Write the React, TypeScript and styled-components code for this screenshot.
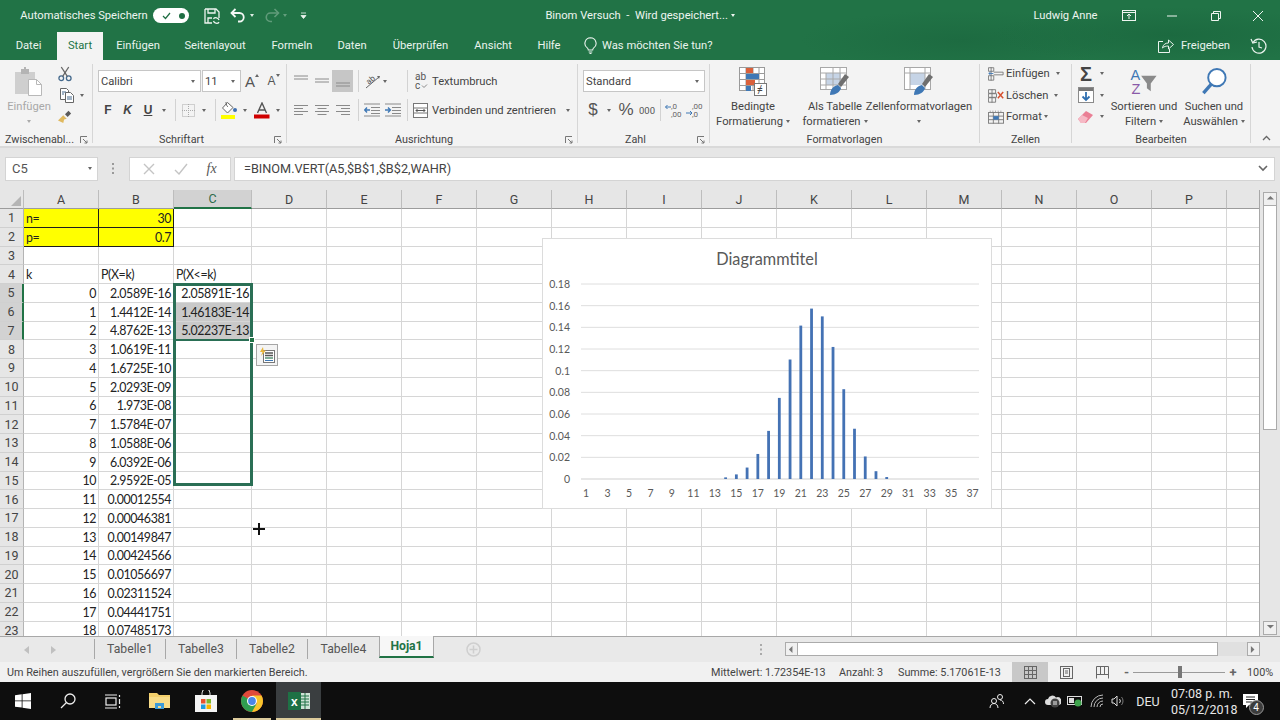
import React from "react";
import styled, { createGlobalStyle } from "styled-components";

const GlobalStyle = createGlobalStyle`
  html, body { margin: 0; padding: 0; background: #e6e6e6; }
  * { box-sizing: border-box; }
`;

const UI = `Roboto, "Noto Sans", sans-serif`;
const CELL = `Lato, "Liberation Sans", sans-serif`;

const Page = styled.div`
  width: 1280px;
  height: 720px;
  overflow: hidden;
  display: flex;
  flex-direction: column;
  font-family: ${UI};
  font-size: 11.2px;
  color: #444;
`;

/* ---------- title + tabs ---------- */
const Chrome = styled.div`
  background:
    radial-gradient(ellipse 180px 28px at 1170px 35px, #1c6a40 0%, rgba(28, 106, 64, 0) 100%),
    radial-gradient(ellipse 160px 30px at 960px 40px, #1d6b41 0%, rgba(29, 107, 65, 0) 100%),
    #217346;
  color: #fff;
`;

const TitleRow = styled.div`
  height: 31px;
  display: flex;
  align-items: center;
  padding-left: 21px;
  color: #eef5f0;
`;

const TitleBit = styled.div<{ $w?: number; $ml?: number; $dim?: boolean }>`
  display: flex;
  align-items: center;
  justify-content: ${(p) => (p.$w ? "center" : "flex-start")};
  white-space: nowrap;
  flex: none;
  width: ${(p) => (p.$w ? `${p.$w}px` : "auto")};
  margin-left: ${(p) => p.$ml ?? 0}px;
  opacity: ${(p) => (p.$dim ? 0.35 : 1)};
`;

const AutoSave = styled.div`
  width: 36px;
  height: 15px;
  margin-left: 6px;
  flex: none;
  border-radius: 8px;
  background: #fff;
  display: flex;
  align-items: center;
  justify-content: space-between;
  padding: 0 4px 0 9px;
`;

const AutoSaveDot = styled.span`
  width: 6px;
  height: 6px;
  border-radius: 50%;
  background: #1f6e43;
`;

const TabRow = styled.div`
  height: 29px;
  display: flex;
  align-items: flex-end;
`;

const Tab = styled.div<{ $w: number; $on?: boolean }>`
  width: ${(p) => p.$w}px;
  height: 28px;
  display: flex;
  align-items: center;
  justify-content: center;
  white-space: nowrap;
  padding-bottom: 1px;
  background: ${(p) => (p.$on ? "#f3f3f3" : "transparent")};
  color: ${(p) => (p.$on ? "#217346" : "#eaf3ed")};
`;

const TellMe = styled.div`
  display: flex;
  align-items: center;
  gap: 5px;
  margin-left: 8px;
  height: 28px;
  padding-bottom: 1px;
  color: #eaf3ed;
`;

const ShareBox = styled.div`
  margin-left: auto;
  display: flex;
  align-items: center;
  height: 28px;
  padding: 0 13px 1px 0;
  color: #eaf3ed;
  gap: 7px;
`;

/* ---------- ribbon ---------- */
const Ribbon = styled.div`
  height: 88px;
  background: #f3f3f3;
  border-bottom: 2px solid #d9d9d9;
  display: flex;
  padding-top: 4px;
  position: relative;
`;

const Group = styled.div<{ $w: number }>`
  width: ${(p) => p.$w}px;
  height: 79px;
  flex: none;
  border-right: 1px solid #d6d6d6;
  display: flex;
  flex-direction: column;
`;

const Body = styled.div<{ $pt?: number; $pl?: number }>`
  height: 65px;
  flex: none;
  padding-top: ${(p) => p.$pt ?? 6}px;
  padding-left: ${(p) => p.$pl ?? 0}px;
  display: flex;
`;

const Stack = styled.div<{ $gap?: number; $mt?: number }>`
  display: flex;
  flex-direction: column;
  margin-top: ${(p) => p.$mt ?? 0}px;
  gap: ${(p) => p.$gap ?? 7}px;
`;

const Row = styled.div`
  display: flex;
  align-items: center;
  height: 22px;
  white-space: nowrap;
`;

const GroupLabel = styled.div<{ $shift?: number }>`
  height: 14px;
  flex: none;
  line-height: 14px;
  margin-top: 4px;
  display: grid;
  grid-template-columns: 1fr auto 1fr;
  font-size: 10.8px;
  color: #444;
  white-space: nowrap;
  & > span {
    grid-column: 2;
    transform: translateX(${(p) => p.$shift ?? 0}px);
  }
`;

const LauncherBox = styled.div`
  grid-column: 3;
  justify-self: end;
  padding-right: 4px;
  display: flex;
  align-items: center;
`;

const Cell = styled.div<{ $w: number; $on?: boolean }>`
  width: ${(p) => p.$w}px;
  height: 22px;
  flex: none;
  display: flex;
  align-items: center;
  justify-content: center;
  background: ${(p) => (p.$on ? "#c6c6c6" : "transparent")};
`;

const VSep = styled.div<{ $w: number }>`
  width: ${(p) => p.$w}px;
  height: 22px;
  flex: none;
  display: flex;
  justify-content: center;
  &::before {
    content: "";
    width: 1px;
    background: #d2d2d2;
  }
`;

const Caret = styled.span<{ $c?: string }>`
  display: inline-block;
  flex: none;
  width: 0;
  height: 0;
  border-left: 2.5px solid transparent;
  border-right: 2.5px solid transparent;
  border-top: 3px solid ${(p) => p.$c ?? "#666"};
`;

const SizeCaret = styled(Caret)<{ $up?: boolean }>`
  align-self: flex-start;
  margin-top: 4px;
  transform: ${(p) => (p.$up ? "rotate(180deg)" : "none")};
`;

const Combo = styled.div<{ $w: number; $ml?: number }>`
  width: ${(p) => p.$w}px;
  height: 22px;
  margin-left: ${(p) => p.$ml ?? 0}px;
  flex: none;
  background: #fff;
  border: 1px solid #c6c6c6;
  display: flex;
  align-items: center;
  justify-content: space-between;
  padding: 0 5px 0 2px;
  color: #444;
`;

const BigButton = styled.div<{ $w: number; $muted?: boolean; $mt?: number }>`
  width: ${(p) => p.$w}px;
  flex: none;
  margin-top: ${(p) => p.$mt ?? -3}px;
  display: flex;
  flex-direction: column;
  align-items: center;
  color: ${(p) => (p.$muted ? "#a8a8a8" : "#444")};
  line-height: 15px;
  white-space: nowrap;
  & > svg {
    height: 29px;
    margin-bottom: 3px;
    flex: none;
  }
`;

const BigLine = styled.div`
  height: 15px;
  display: flex;
  align-items: center;
  gap: 3px;
`;

const SmallRow = styled.div`
  height: 21.5px;
  display: flex;
  align-items: center;
  white-space: nowrap;
`;

const FontLetter = styled.span<{ $i?: boolean; $u?: boolean }>`
  font-family: "Liberation Sans", sans-serif;
  font-weight: 700;
  font-size: 12px;
  font-style: ${(p) => (p.$i ? "italic" : "normal")};
  text-decoration: ${(p) => (p.$u ? "underline" : "none")};
  color: #444;
`;

const GrowA = styled.span<{ $small?: boolean }>`
  font-family: "Liberation Sans", sans-serif;
  font-size: ${(p) => (p.$small ? 12 : 15)}px;
  color: #555;
`;

const BigSign = styled.span`
  font-family: "Liberation Sans", sans-serif;
  font-size: 17px;
  color: #555;
`;

const ThousandMark = styled.span`
  font-size: 9.5px;
  color: #555;
`;

const Sigma = styled.span`
  font-family: "Liberation Sans", sans-serif;
  font-weight: 700;
  font-size: 20px;
  line-height: 20px;
  color: #444;
`;

const Collapse = styled.div`
  position: absolute;
  right: 9px;
  bottom: 2px;
`;

/* ---------- formula bar ---------- */
const FormulaBar = styled.div`
  height: 42px;
  background: #e6e6e6;
  display: flex;
  align-items: center;
  padding: 0 5px 1px;
`;

const NameBox = styled.div`
  width: 93px;
  height: 24px;
  background: #fff;
  border: 1px solid #d4d4d4;
  display: flex;
  align-items: center;
  justify-content: space-between;
  padding: 0 5px 0 6px;
  font-size: 13px;
  color: #555;
`;

const GripDots = styled.div`
  width: 31px;
  display: flex;
  justify-content: center;
`;

const FnBox = styled.div`
  width: 102px;
  height: 24px;
  background: #fff;
  border: 1px solid #d4d4d4;
  display: flex;
  align-items: center;
  justify-content: space-around;
  padding: 0 4px;
`;

const FxText = styled.span`
  font-family: "Liberation Serif", serif;
  font-style: italic;
  font-size: 14px;
  color: #555;
`;

const FormulaInput = styled.div`
  flex: 1;
  height: 24px;
  margin-left: 3px;
  background: #fff;
  border: 1px solid #d4d4d4;
  display: flex;
  align-items: center;
  justify-content: space-between;
  padding: 0 6px 0 9px;
  font-size: 12.7px;
  color: #444;
`;

/* ---------- sheet ---------- */
const SheetRow = styled.div`
  height: 446px;
  display: flex;
  background: #e6e6e6;
`;

const Sheet = styled.div`
  width: 1260px;
  position: relative;
  overflow: hidden;
  border-right: 1px solid #a8a8a8;
`;

const SheetGrid = styled.div`
  display: grid;
  grid-template-columns: 24px 75px 75px 78px repeat(13, 75px) 33px;
  grid-template-rows: 19px;
  grid-auto-rows: 18.75px;
  background: #fff;
`;

const ColHead = styled.div<{ $on?: boolean }>`
  background: ${(p) => (p.$on ? "#d2d2d2" : "#e6e6e6")};
  border-right: 1px solid #bdbdbd;
  border-bottom: ${(p) => (p.$on ? "2px solid #217346" : "1px solid #9c9c9c")};
  display: flex;
  align-items: center;
  justify-content: center;
  font-size: 12.5px;
  color: ${(p) => (p.$on ? "#2b6a4a" : "#444")};
`;

const Corner = styled(ColHead)`
  align-items: flex-end;
  justify-content: flex-end;
  padding: 0 2px 2px 0;
`;

const RowHead = styled.div<{ $on?: boolean }>`
  background: ${(p) => (p.$on ? "#d2d2d2" : "#e6e6e6")};
  border-right: ${(p) => (p.$on ? "2px solid #217346" : "1px solid #b4b4b4")};
  border-bottom: 1px solid #d0d0d0;
  display: flex;
  align-items: center;
  justify-content: center;
  font-size: 12.5px;
  color: #444;
`;

const GridCell = styled.div<{ $right?: boolean; $fill?: string; $dark?: boolean }>`
  background: ${(p) => p.$fill ?? "#fff"};
  border-right: 1px solid ${(p) => (p.$dark ? "#1e1e1e" : "#d6d6d6")};
  border-bottom: 1px solid ${(p) => (p.$dark ? "#1e1e1e" : "#d6d6d6")};
  display: flex;
  align-items: center;
  justify-content: ${(p) => (p.$right ? "flex-end" : "flex-start")};
  padding: 1px 2px 0;
  font-family: ${CELL};
  font-size: 12.4px;
  letter-spacing: -0.4px;
  color: #222;
  white-space: nowrap;
  overflow: hidden;
`;

const Selection = styled.div`
  position: absolute;
  left: 173px;
  top: 93px;
  width: 80px;
  height: 203px;
  border: 3px solid #2a6f55;
  pointer-events: none;
`;

const SourceEdge = styled.div`
  position: absolute;
  left: 174px;
  top: 149px;
  width: 78px;
  height: 2px;
  background: #2a6f55;
`;

const FillHandle = styled.div`
  position: absolute;
  left: 249px;
  top: 147px;
  width: 6px;
  height: 6px;
  background: #217346;
  border: 1px solid #fff;
`;

const FlashTag = styled.div`
  position: absolute;
  left: 256px;
  top: 154px;
  width: 22px;
  height: 22px;
  background: #f4f4f4;
  border: 1px solid #a6a6a6;
  display: flex;
  align-items: center;
  justify-content: center;
`;

const CrossCursor = styled.svg`
  position: absolute;
  left: 253px;
  top: 333px;
`;

const ChartBox = styled.div`
  position: absolute;
  left: 542px;
  top: 48px;
  width: 450px;
  height: 271px;
  background: #fff;
  border: 1px solid #dcdcdc;
`;

const VScroll = styled.div`
  width: 20px;
  padding: 2px 3px 1px;
  display: flex;
  flex-direction: column;
`;

const ScrollBtn = styled.div<{ $w?: number }>`
  width: ${(p) => p.$w ?? 14}px;
  height: 14px;
  flex: none;
  background: #f0f0f0;
  border: 1px solid #ababab;
  display: flex;
  align-items: center;
  justify-content: center;
`;

const VThumb = styled.div`
  height: 224px;
  background: #fff;
  border: 1px solid #ababab;
  border-top: none;
`;

const VTrack = styled.div`
  flex: 1;
`;

/* ---------- sheet tabs ---------- */
const TabsBar = styled.div`
  height: 26px;
  background: #e9e9e9;
  display: flex;
  align-items: flex-start;
  border-top: 1px solid #a8a8a8;
`;

const NavArrows = styled.div`
  width: 94px;
  height: 25px;
  display: flex;
  align-items: center;
  padding-left: 24px;
  gap: 22px;
`;

const SheetTab = styled.div<{ $on?: boolean; $w: number }>`
  width: ${(p) => p.$w}px;
  height: ${(p) => (p.$on ? 22 : 20)}px;
  margin-top: ${(p) => (p.$on ? -1 : 2)}px;
  display: flex;
  align-items: center;
  justify-content: center;
  font-size: 12.2px;
  border-left: 1px solid #a8a8a8;
  border-right: ${(p) => (p.$on ? "1px solid #a8a8a8" : "none")};
  background: ${(p) => (p.$on ? "#f7f7f7" : "transparent")};
  border-bottom: ${(p) => (p.$on ? "2px solid #217346" : "none")};
  color: ${(p) => (p.$on ? "#217346" : "#555")};
  font-weight: ${(p) => (p.$on ? 700 : 400)};
`;

const AddSheet = styled.div`
  margin-left: 32px;
  height: 25px;
  display: flex;
  align-items: center;
`;

const TabGrip = styled.div`
  margin-left: 269px;
  width: 23px;
  height: 25px;
  display: flex;
  align-items: center;
  justify-content: center;
`;

const HScroll = styled.div`
  margin: 5px 0 0 12px;
  width: 475px;
  height: 14px;
  display: flex;
`;

const HThumb = styled.div`
  width: 420px;
  background: #fff;
  border: 1px solid #ababab;
  border-left: none;
`;

const HTrack = styled.div`
  flex: 1;
  background: #e0e0e0;
`;

/* ---------- status ---------- */
const StatusBar = styled.div`
  height: 20px;
  background: #f1f1f1;
  display: flex;
  align-items: center;
  padding-left: 7px;
  font-size: 10.8px;
  color: #444;
`;

const StatusStat = styled.span<{ $w: number }>`
  width: ${(p) => p.$w}px;
  flex: none;
  white-space: nowrap;
`;

const ViewBtn = styled.div<{ $on?: boolean }>`
  width: 36px;
  height: 20px;
  flex: none;
  display: flex;
  align-items: center;
  justify-content: center;
  background: ${(p) => (p.$on ? "#c8c8c8" : "transparent")};
`;

const ZoomTrack = styled.div`
  width: 92px;
  height: 1px;
  background: #9a9a9a;
  display: flex;
  align-items: center;
  padding-left: 45px;
`;

const ZoomThumb = styled.span`
  width: 4px;
  height: 12px;
  background: #777;
`;

const ZoomSign = styled.span<{ $w: number }>`
  font-weight: 700;
  font-size: 13px;
  color: #666;
  width: ${(p) => p.$w}px;
  text-align: center;
`;

const ZoomValue = styled.span`
  margin-left: 6px;
  white-space: nowrap;
`;

/* ---------- taskbar ---------- */
const Taskbar = styled.div`
  height: 38px;
  background: #0e0e0e;
  display: flex;
  align-items: center;
  color: #e8e8e8;
`;

const TaskItem = styled.div<{ $w: number; $on?: boolean; $mark?: boolean; $ml?: number }>`
  width: ${(p) => p.$w}px;
  height: 38px;
  flex: none;
  position: relative;
  margin-left: ${(p) => p.$ml ?? 0}px;
  display: flex;
  align-items: center;
  justify-content: center;
  background: ${(p) => (p.$on ? "#3a3e40" : "transparent")};
  &::after {
    content: "";
    display: ${(p) => (p.$mark ? "block" : "none")};
    position: absolute;
    left: ${(p) => (p.$on ? 0 : 5)}px;
    right: ${(p) => (p.$on ? 0 : 5)}px;
    bottom: 0;
    height: 2px;
    background: #dccb9c;
  }
`;

const TrayGroup = styled.div`
  margin-left: auto;
  display: flex;
  align-items: center;
  height: 38px;
  font-size: 12.5px;
`;

const Clock = styled.div`
  width: 60px;
  flex: none;
  font-size: 12.5px;
  line-height: 16px;
  padding-top: 2px;
  white-space: nowrap;
`;

const NoticeBadge = styled.span`
  position: absolute;
  right: -6px;
  bottom: -6px;
  width: 15px;
  height: 15px;
  border-radius: 50%;
  background: #3c3c3c;
  border: 1px solid #999;
  font-size: 10px;
  line-height: 13px;
  text-align: center;
  color: #fff;
`;

const NoticeWrap = styled.div`
  position: relative;
  display: flex;
`;

/* ---------- icons ---------- */
const SaveIcon = () => (
  <svg width="18" height="18" viewBox="0 0 18 18" fill="none" stroke="#eef5f0" strokeWidth="1.3">
    <path d="M2 2h11l3 3v6M2 2v14h7" />
    <path d="M5 2v4h7V2M5 16v-5h4" />
    <path d="M16 13a3.3 3.3 0 0 0-5.6-1.2M10.5 14a3.3 3.3 0 0 0 5.6 1.2" />
  </svg>
);
const UndoIcon = () => (
  <svg width="16" height="15" viewBox="0 0 16 15" fill="none" stroke="#f4f8f5" strokeWidth="1.8">
    <path d="M5.5 1 1.5 5l4 4" />
    <path d="M2 5h7.5a4 4 0 0 1 0 8.5H8" />
  </svg>
);
const RedoIcon = () => (
  <svg width="16" height="15" viewBox="0 0 16 15" fill="none" stroke="#d7e7dc" strokeWidth="1.6">
    <path d="M10.5 1l4 4-4 4" />
    <path d="M14 5H6.5a4 4 0 0 0 0 8.5H8" />
  </svg>
);
const Launcher = () => (
  <svg width="8" height="8" viewBox="0 0 8 8" fill="none" stroke="#777">
    <path d="M.5 7V.5H7M3 3l4 4M7 4.5V7H4.5" />
  </svg>
);
const PasteIcon = () => (
  <svg width="28" height="29" viewBox="0 0 28 29">
    <rect x="0" y="5" width="20" height="22" fill="#cfcfcf" />
    <rect x="6" y="2" width="8" height="5" fill="#b4b4b4" />
    <rect x="9" y="0" width="2" height="3" fill="#b4b4b4" />
    <path d="M13.5 12.5h8l5 5v11h-13z" fill="#fff" stroke="#b8b8b8" />
    <path d="M21.5 12.5v5h5" fill="none" stroke="#b8b8b8" />
  </svg>
);
const ScissorsIcon = () => (
  <svg width="15" height="16" viewBox="0 0 15 16" fill="none" stroke="#44698c" strokeWidth="1.4">
    <circle cx="3.5" cy="12.5" r="2.5" />
    <circle cx="11.5" cy="12.5" r="2.5" />
    <path d="M5 10.5 11.5.5" stroke="#666" />
    <path d="M10 10.5 3.5.5" stroke="#666" />
  </svg>
);
const CopyIcon = () => (
  <svg width="14" height="15" viewBox="0 0 14 15" fill="#fff" stroke="#666">
    <path d="M.5.5h6l2 2v9h-8z" />
    <path d="M5.5 4.5h5l3 3v7h-8z" />
    <path d="M2 4h4M2 6h2M7 9h5M7 11h5" stroke="#44698c" />
  </svg>
);
const BrushIcon = () => (
  <svg width="16" height="15" viewBox="0 0 16 15">
    <path d="M0 12l6-6 4 4-3 1-1 4z" fill="#e0b95f" />
    <path d="M8 5l4-4 3 3-4 4z" fill="#5a5a5a" />
  </svg>
);
const BordersIcon = () => (
  <svg width="13" height="13" viewBox="0 0 13 13" fill="none" stroke="#aaa" strokeDasharray="1 1">
    <rect x=".5" y=".5" width="12" height="12" />
    <path d="M6.5 0v13M0 6.5h13" />
  </svg>
);
const BucketIcon = () => (
  <svg width="17" height="18" viewBox="0 0 17 18">
    <path d="M6.5 1.5 1.5 7l5 5 5.5-5.5z" fill="#fff" stroke="#666" />
    <path d="M5 1c0 3 1 4 2 5" stroke="#666" fill="none" />
    <circle cx="14" cy="9" r="2" fill="#3f6fb0" />
    <rect x="0" y="14" width="14" height="4" fill="#ffff00" />
  </svg>
);
const FontColorIcon = () => (
  <svg width="16" height="17" viewBox="0 0 16 17">
    <path d="M3.5 11 8 1l4.5 10M5 8h6" fill="none" stroke="#555" strokeWidth="1.4" />
    <rect x="0" y="12.5" width="15.5" height="4" fill="#d00000" />
  </svg>
);
const Lines = ({ x0 = 0 }: { x0?: number }) => {
  const ws = [14, 9, 14, 9];
  return (
    <svg width="14" height="14" viewBox="0 0 14 14" stroke="#8a8a8a">
      {ws.map((w, i) => (
        <path key={i} d={`M${x0 === 1 ? (14 - w) / 2 : x0 === 2 ? 14 - w : 0} ${2.5 + i * 3}h${w}`} />
      ))}
    </svg>
  );
};
const VAlign = ({ y }: { y: number }) => (
  <svg width="14" height="14" viewBox="0 0 14 14" stroke="#8a8a8a">
    <path d={`M0 ${y}h14M0 ${y + 3}h14`} />
  </svg>
);
const OrientIcon = () => (
  <svg width="18" height="16" viewBox="0 0 18 16" fill="none">
    <path d="M3 15 16 4" stroke="#666" />
    <text x="3" y="10" fontSize="8" fill="#555" transform="rotate(-40 7 7)" fontFamily="Roboto">ab</text>
    <path d="M14 3l3 0-1 3" fill="#666" />
  </svg>
);
const IndentIcon = ({ back }: { back?: boolean }) => (
  <svg width="16" height="14" viewBox="0 0 16 14" fill="none">
    <path d="M0 1h16M7 4.5h9M7 7.5h9M7 10.5h9M0 13h16" stroke="#8a8a8a" />
    <path d={back ? "M6 7H1M3 4.5 .8 7 3 9.5" : "M0 7h5M3 4.5 5.4 7 3 9.5"} stroke="#3f78b5" strokeWidth="1.4" />
  </svg>
);
const WrapIcon = () => (
  <svg width="17" height="18" viewBox="0 0 17 18">
    <text x="2" y="8" fontSize="10" fill="#555" fontFamily="Roboto">ab</text>
    <text x="2" y="17" fontSize="10" fill="#555" fontFamily="Roboto">c</text>
    <path d="M9 13.5l2 2 3-3" stroke="#888" fill="none" />
  </svg>
);
const MergeIcon = () => (
  <svg width="15" height="15" viewBox="0 0 15 15" fill="#fff" stroke="#777">
    <rect x=".5" y=".5" width="14" height="14" />
    <path d="M0 5h15M0 10h15" />
    <path d="M3 7.5h9M4.5 6 3 7.5 4.5 9M10.5 6 12 7.5 10.5 9" stroke="#555" fill="none" />
  </svg>
);
const DecimalIcon = ({ more }: { more?: boolean }) => (
  <svg width="18" height="16" viewBox="0 0 18 16">
    <text x="7" y="7" fontSize="8" fill="#666" fontFamily="Roboto">{more ? ",0" : ",00"}</text>
    <text x="7" y="15" fontSize="8" fill="#666" fontFamily="Roboto">{more ? ",00" : ",0"}</text>
    <path d={more ? "M7 5H1.5M3.5 3 1.5 5l2 2" : "M1 11h6M5 9l2 2-2 2"} stroke="#3f78b5" fill="none" />
  </svg>
);
const CondIcon = () => (
  <svg width="28" height="29" viewBox="0 0 28 29" stroke="#9a9a9a">
    <rect x=".5" y=".5" width="25" height="23" fill="#fff" />
    <path d="M.5 6.5h25M.5 12.5h25M.5 18.5h25M7 .5v23M14 .5v23M20 .5v23" fill="none" />
    <rect x="7" y="1" width="7" height="5" fill="#d9603b" stroke="none" />
    <rect x="7" y="7" width="13" height="5" fill="#3f78b5" stroke="none" />
    <rect x="7" y="13" width="9" height="5" fill="#d9603b" stroke="none" />
    <rect x="7" y="19" width="5" height="5" fill="#3f78b5" stroke="none" />
    <rect x="15.5" y="16.5" width="12" height="12" fill="#fff" stroke="#777" />
    <text x="18" y="26" fontSize="10" fill="#444" stroke="none" fontFamily="Noto Sans">≠</text>
  </svg>
);
const TableIcon = ({ plain }: { plain?: boolean }) => (
  <svg width="30" height="29" viewBox="0 0 30 29">
    <rect x=".5" y=".5" width="26" height="22" fill="#fff" stroke="#a8a8a8" />
    <rect x="6" y="6" width="15" height="12" fill="#c6d4e6" />
    {!plain && <path d="M6 6v17M13 1v22M20 1v22M1 6h26M1 12h26M1 18h26" stroke="#a8a8a8" fill="none" />}
    {plain && <path d="M1 6h26M6 1v22M21 1v22" stroke="#a8a8a8" fill="none" />}
    <path d="M18 17l7-10 4 3-8 10z" fill="#6f6f6f" />
    <path d="M10 28c0-5 3-9 8-10l3 3c-1 4-5 7-11 7z" fill="#3f78b5" />
  </svg>
);
const CellInsIcon = () => (
  <svg width="16" height="15" viewBox="0 0 18 16" fill="none" stroke="#777">
    <path d="M.5 1.5h6v4h-6zM.5 10.5h6v5h-6zM3.5 1v15M6.5 6.5H17v3H6.5" />
    <path d="M6 8H1M3 6 1 8l2 2" stroke="#3f78b5" />
  </svg>
);
const CellDelIcon = () => (
  <svg width="17" height="15" viewBox="0 0 19 16" fill="none" stroke="#777">
    <path d="M.5 1.5h8v4h-8zM.5 10.5h8v5h-8zM4.5 1v15M.5 6h9v4h-9z" />
    <path d="M11 4l6 7M17 4l-6 7" stroke="#d6512f" strokeWidth="1.6" />
  </svg>
);
const CellFmtIcon = () => (
  <svg width="16" height="14" viewBox="0 0 18 15" fill="none" stroke="#777">
    <rect x=".5" y="2.5" width="17" height="12" />
    <path d="M.5 6.5h17M.5 10.5h17M6 2v13M12 2v13" />
    <rect x="6" y="6.5" width="6" height="4" fill="#3f78b5" stroke="none" />
    <path d="M2 1h1M5 1h1M8 1h1M11 1h1M14 1h1" />
  </svg>
);
const FillDownIcon = () => (
  <svg width="16" height="16" viewBox="0 0 16 16" fill="none">
    <rect x=".5" y=".5" width="15" height="15" fill="#fff" stroke="#8a8a8a" />
    <rect x="1" y="1" width="14" height="3" fill="#777" />
    <path d="M8 5v8M4.5 9.5 8 13l3.5-3.5" stroke="#2f6fb0" strokeWidth="1.8" />
  </svg>
);
const EraserIcon = () => (
  <svg width="16" height="13" viewBox="0 0 16 13">
    <path d="M0 9l8-8 7 4-7 8H3z" fill="#ea7f95" />
    <path d="M0 9l4-4 6 3-3 5H3z" fill="#f6b9c5" />
  </svg>
);
const SortIcon = () => (
  <svg width="30" height="30" viewBox="0 0 30 30">
    <text x="1" y="13" fontSize="15" fill="#3f78b5" fontFamily="Liberation Sans">A</text>
    <text x="2" y="28" fontSize="15" fill="#8a5aa8" fontFamily="Liberation Sans">Z</text>
    <path d="M12 9h16l-6 8v8l-4-3v-5z" fill="#8a8a8a" />
  </svg>
);
const SearchIcon = () => (
  <svg width="28" height="30" viewBox="0 0 28 30" fill="none">
    <circle cx="17" cy="11" r="9" stroke="#3f78b5" strokeWidth="2" fill="#fff" />
    <path d="M11 18 3 27" stroke="#3f78b5" strokeWidth="3.5" />
  </svg>
);
const BulbIcon = () => (
  <svg width="13" height="17" viewBox="0 0 13 17" fill="none" stroke="#eaf3ed" strokeWidth="1.1">
    <path d="M6.5.8a5.6 5.6 0 0 0-3 10.3c.6.5.7 1 .8 1.9h4.4c.1-.9.2-1.4.8-1.9A5.6 5.6 0 0 0 6.5.8zM4.7 15h3.6M5.5 16.5h2" />
  </svg>
);
const ShareIcon = () => (
  <svg width="16" height="15" viewBox="0 0 16 15" fill="none" stroke="#eaf3ed">
    <path d="M5 3.5H.5v11h11V11" />
    <path d="M4.5 10c.5-3.5 3-5 6-5V2l5 4.5-5 4.5V8c-2.5 0-4.5.5-6 2z" />
  </svg>
);
const HistoryIcon = () => (
  <svg width="17" height="16" viewBox="0 0 17 16" fill="none" stroke="#eaf3ed" strokeWidth="1.2">
    <path d="M3 4.5A7 7 0 1 1 2 9" />
    <path d="M1 1l1.8 4L7 4M9 4v5l3 1" />
  </svg>
);
const PinIcon = () => (
  <svg width="14" height="11" viewBox="0 0 14 11" fill="none" stroke="#eef5f0">
    <rect x=".5" y=".5" width="13" height="10" />
    <path d="M1 2.5h12M7 9V4.5M5 6l2-2 2 2" />
  </svg>
);
const MinIcon = () => (
  <svg width="10" height="2" viewBox="0 0 10 2" stroke="#eef5f0"><path d="M0 1h10" /></svg>
);
const RestoreIcon = () => (
  <svg width="10" height="10" viewBox="0 0 10 10" fill="none" stroke="#eef5f0">
    <path d="M.5 2.5h7v7h-7zM2.5 2.5v-2h7v7h-2" />
  </svg>
);
const CloseIcon = () => (
  <svg width="10" height="10" viewBox="0 0 10 10" stroke="#eef5f0"><path d="M0 0l10 10M10 0 0 10" /></svg>
);
const Check = () => (
  <svg width="9" height="8" viewBox="0 0 9 8" fill="none" stroke="#1f6e43" strokeWidth="1.2"><path d="M1 4l2.5 2.5L8 1" /></svg>
);
const FlashIcon = () => (
  <svg width="16" height="16" viewBox="0 0 16 16">
    <rect x="4.5" y="3.5" width="11" height="12" fill="#fff" stroke="#777" />
    <path d="M6 6h8M6 8.5h8" stroke="#555" strokeWidth="1.4" />
    <path d="M6 11h8" stroke="#4a8a6a" strokeWidth="1.4" />
    <path d="M6 13.5h8" stroke="#3f78b5" />
    <path d="M4 0 1 5h2.5L2 9l5-5.5H4.5z" fill="#e8b53a" />
  </svg>
);
const WinLogo = () => (
  <svg width="16" height="16" viewBox="0 0 16 16" fill="#fff">
    <path d="M0 2.3 6.7 1.3V7.5H0zM7.5 1.2 16 0v7.5H7.5zM0 8.3h6.7v6.3L0 13.7zM7.5 8.3H16V16L7.5 14.8z" />
  </svg>
);
const SearchTb = () => (
  <svg width="16" height="16" viewBox="0 0 16 16" fill="none" stroke="#eee" strokeWidth="1.3">
    <circle cx="10" cy="6" r="5" />
    <path d="M6.5 9.5 1 15" />
  </svg>
);
const TaskViewIcon = () => (
  <svg width="16" height="15" viewBox="0 0 16 15" fill="none" stroke="#eee" strokeWidth="1.2">
    <path d="M0 1h12M0 14h12" />
    <rect x="1" y="4" width="10" height="7" />
    <path d="M14.5 1v2M14.5 5v5M14.5 12v2" />
  </svg>
);
const ExplorerIcon = () => (
  <svg width="21" height="18" viewBox="0 0 21 18">
    <path d="M0 1h8l2 2h11v13H0z" fill="#f3cf6b" />
    <rect x="0" y="5" width="21" height="11" fill="#f8dc88" />
    <rect x="6" y="11" width="9" height="6" fill="#3d9bd8" />
    <rect x="9" y="14" width="3" height="2" fill="#f8dc88" />
  </svg>
);
const StoreIcon = () => (
  <svg width="22" height="22" viewBox="0 0 22 22">
    <path d="M7 5V3a4 4 0 0 1 8 0v2" fill="none" stroke="#ddd" />
    <rect x="0" y="5" width="22" height="17" fill="#f4f4f4" />
    <rect x="6" y="9" width="4.5" height="4.5" fill="#e8522f" />
    <rect x="11.5" y="9" width="4.5" height="4.5" fill="#7cb82f" />
    <rect x="6" y="14.5" width="4.5" height="4.5" fill="#1f9be0" />
    <rect x="11.5" y="14.5" width="4.5" height="4.5" fill="#f7b500" />
  </svg>
);
const ChromeIcon = () => (
  <svg width="22" height="22" viewBox="0 0 22 22">
    <circle cx="11" cy="11" r="11" fill="#e04a3b" />
    <path d="M11 11 1.5 5.5A11 11 0 0 0 11 22l5-8z" fill="#2f9e50" />
    <path d="M11 5.5h9.5A11 11 0 0 1 11 22l5-9z" fill="#f8c62c" />
    <circle cx="11" cy="11" r="5" fill="#fff" />
    <circle cx="11" cy="11" r="3.9" fill="#4a86e8" />
  </svg>
);
const ExcelIcon = () => (
  <svg width="22" height="18" viewBox="0 0 22 18">
    <rect x="12" y="1" width="10" height="16" fill="#cfe3d6" />
    <path d="M13 4h8M13 7h8M13 10h8M13 13h8M17 1v16" stroke="#217346" />
    <rect x="0" y="0" width="13" height="18" fill="#1e7145" />
    <text x="3" y="14" fontSize="12" fontWeight="700" fill="#fff" fontFamily="Liberation Sans">x</text>
  </svg>
);
const PeopleIcon = () => (
  <svg width="16" height="16" viewBox="0 0 16 16" fill="none" stroke="#eee">
    <circle cx="11" cy="4" r="2.5" />
    <circle cx="5" cy="8" r="2.5" />
    <path d="M1 15c0-3 2-4.5 4-4.5s4 1.5 4 4.5M11 7c2 0 3.5 1.5 3.5 4" />
  </svg>
);
const TrayChevron = () => (
  <svg width="12" height="7" viewBox="0 0 12 7" fill="none" stroke="#eee" strokeWidth="1.2"><path d="M1 6l5-5 5 5" /></svg>
);
const CloudIcon = () => (
  <svg width="16" height="14" viewBox="0 0 16 14">
    <path d="M3 11a3 3 0 0 1 0-6 4.5 4.5 0 0 1 8-1.5A4 4 0 0 1 14 11z" fill="#ddd" />
    <circle cx="10" cy="9" r="4.5" fill="#444" />
    <path d="M9 7v4M11 7v4" stroke="#eee" />
  </svg>
);
const BatteryIcon = () => (
  <svg width="16" height="12" viewBox="0 0 16 12">
    <rect x=".5" y="1.5" width="14" height="8" fill="none" stroke="#ddd" />
    <rect x="2" y="3" width="5" height="5" fill="#ddd" />
    <circle cx="11" cy="8" r="3.5" fill="#3fa34d" />
  </svg>
);
const WifiIcon = () => (
  <svg width="16" height="14" viewBox="0 0 16 14" fill="none" stroke="#bbb">
    <path d="M1 13A12 12 0 0 1 13 1M4 13a9 9 0 0 1 9-9M7 13a6 6 0 0 1 6-6M10 13a3 3 0 0 1 3-3" />
  </svg>
);
const VolumeIcon = () => (
  <svg width="14" height="14" viewBox="0 0 14 14" fill="none" stroke="#ddd">
    <path d="M1 5h2l3-3v10L3 9H1zM8.5 5a3 3 0 0 1 0 4" />
    <path d="M10.5 3a6 6 0 0 1 0 8" stroke="#777" />
  </svg>
);
const NoticeIcon = () => (
  <svg width="15" height="15" viewBox="0 0 15 15">
    <path d="M0 0h15v11H6l-3 3v-3H0z" fill="#fff" />
    <path d="M3 3h9M3 5.5h9M3 8h6" stroke="#222" />
  </svg>
);
const ScrollArrow = ({ dir }: { dir: "up" | "down" | "left" | "right" }) => {
  const d = { up: "M0 4 4 0l4 4z", down: "M0 0h8L4 4z", left: "M4 0v8L0 4z", right: "M0 0l4 4-4 4z" }[dir];
  return (
    <svg width="8" height="8" viewBox="-1 -1 9 9" fill="#777">
      <path d={d} />
    </svg>
  );
};

/* ---------- data ---------- */
const COLS = ["A", "B", "C", "D", "E", "F", "G", "H", "I", "J", "K", "L", "M", "N", "O", "P", ""];

type RowData = { a?: string; b?: string; c?: string; aRight?: boolean; bRight?: boolean; cRight?: boolean; yellow?: boolean };

const VALUES = [
  "2.0589E-16", "1.4412E-14", "4.8762E-13", "1.0619E-11", "1.6725E-10", "2.0293E-09", "1.973E-08",
  "1.5784E-07", "1.0588E-06", "6.0392E-06", "2.9592E-05", "0.00012554", "0.00046381", "0.00149847",
  "0.00424566", "0.01056697", "0.02311524", "0.04441751", "0.07485173",
];
const CUMULATIVE = ["2.05891E-16", "1.46183E-14", "5.02237E-13"];

const ROWS: RowData[] = [
  { a: "n=", b: "30", bRight: true, yellow: true },
  { a: "p=", b: "0.7", bRight: true, yellow: true },
  {},
  { a: "k", b: "P(X=k)", c: "P(X<=k)" },
  ...VALUES.map((v, i) => ({
    a: String(i),
    aRight: true,
    b: v,
    bRight: true,
    c: CUMULATIVE[i],
    cRight: true,
  })),
];

const BARS: [number, number][] = [
  [14, 0.00149847], [15, 0.00424566], [16, 0.01056697], [17, 0.02311524], [18, 0.04441751], [19, 0.07485173],
  [20, 0.1103], [21, 0.1416], [22, 0.1573], [23, 0.1501], [24, 0.1219], [25, 0.0829], [26, 0.0464],
  [27, 0.0208], [28, 0.0072], [29, 0.0018],
];

const Chart = () => {
  const y0 = 240;
  const perUnit = 195 / 0.18;
  const xAt = (i: number) => 43 + (i - 1) * 10.74;
  const ticks = [0, 0.02, 0.04, 0.06, 0.08, 0.1, 0.12, 0.14, 0.16, 0.18];
  return (
    <svg width="448" height="269" viewBox="0 0 448 269" fontFamily="Lato, sans-serif">
      <text x="224" y="26" textAnchor="middle" fontSize="16.3" fill="#595959">Diagrammtitel</text>
      {ticks.map((t) => (
        <g key={t}>
          <path d={`M38 ${y0 - t * perUnit}H436`} stroke={t === 0 ? "#cfcfcf" : "#dedede"} />
          <text x="27" y={y0 - t * perUnit + 4} textAnchor="end" fontSize="10.5" fill="#595959">{t}</text>
        </g>
      ))}
      {BARS.map(([i, v]) => (
        <rect key={i} x={xAt(i) - 1.4} y={y0 - v * perUnit} width="2.8" height={v * perUnit} fill="#4472b4" />
      ))}
      {Array.from({ length: 19 }, (_, n) => n * 2 + 1).map((n) => (
        <text key={n} x={xAt(n)} y="258" textAnchor="middle" fontSize="10.5" fill="#595959">{n}</text>
      ))}
    </svg>
  );
};

const App = () => {
  return (
    <Page>
      <GlobalStyle />
      <Chrome>
        <TitleRow>
          <TitleBit $w={126}>Automatisches Speichern</TitleBit>
          <AutoSave>
            <Check />
            <AutoSaveDot />
          </AutoSave>
          <TitleBit $w={18} $ml={14}><SaveIcon /></TitleBit>
          <TitleBit $w={16} $ml={9}><UndoIcon /></TitleBit>
          <TitleBit $w={12}><Caret $c="#dfeee5" /></TitleBit>
          <TitleBit $w={16} $ml={6} $dim><RedoIcon /></TitleBit>
          <TitleBit $w={10} $dim><Caret $c="#dfeee5" /></TitleBit>
          <TitleBit $w={12} $ml={7}>
            <svg width="7" height="7" viewBox="0 0 7 7"><path d="M1 1h5M1 3.5h5L3.5 6.5z" stroke="#eef5f0" fill="#eef5f0" strokeWidth=".8" /></svg>
          </TitleBit>
          <TitleBit $w={192} $ml={235}>Binom Versuch&nbsp; -&nbsp; Wird gespeichert...&nbsp; <Caret $c="#eef5f0" /></TitleBit>
          <TitleBit $w={65} $ml={297}>Ludwig Anne</TitleBit>
          <TitleBit $w={36} $ml={13}><PinIcon /></TitleBit>
          <TitleBit $w={44} $ml={3}><MinIcon /></TitleBit>
          <TitleBit $w={44}><RestoreIcon /></TitleBit>
          <TitleBit $w={40}><CloseIcon /></TitleBit>
        </TitleRow>
        <TabRow>
          <Tab $w={57}>Datei</Tab>
          <Tab $w={46} $on>Start</Tab>
          <Tab $w={70}>Einfügen</Tab>
          <Tab $w={84}>Seitenlayout</Tab>
          <Tab $w={70}>Formeln</Tab>
          <Tab $w={50}>Daten</Tab>
          <Tab $w={87}>Überprüfen</Tab>
          <Tab $w={58}>Ansicht</Tab>
          <Tab $w={54}>Hilfe</Tab>
          <TellMe><BulbIcon />Was möchten Sie tun?</TellMe>
          <ShareBox>
            <ShareIcon />
            <span>Freigeben</span>
            <TitleBit $ml={13}><HistoryIcon /></TitleBit>
          </ShareBox>
        </TabRow>
      </Chrome>

      <Ribbon>
        <Group $w={93}>
          <Body $pt={0}>
            <BigButton $w={58} $muted $mt={3}>
              <PasteIcon />
              <BigLine>Einfügen</BigLine>
              <BigLine><Caret $c="#aaa" /></BigLine>
            </BigButton>
            <Stack $gap={0} $mt={-1}>
              <SmallRow><Cell $w={14}><ScissorsIcon /></Cell></SmallRow>
              <SmallRow><Cell $w={18}><CopyIcon /></Cell><Cell $w={12}><Caret /></Cell></SmallRow>
              <SmallRow><Cell $w={14}><BrushIcon /></Cell></SmallRow>
            </Stack>
          </Body>
          <GroupLabel $shift={-6}><span>Zwischenabl...</span><LauncherBox><Launcher /></LauncherBox></GroupLabel>
        </Group>

        <Group $w={194}>
          <Body $pl={5}>
            <Stack>
              <Row>
                <Combo $w={103}><span>Calibri</span><Caret /></Combo>
                <Combo $w={39} $ml={1}><span>11</span><Caret /></Combo>
                <Cell $w={22}><GrowA>A</GrowA><SizeCaret $up /></Cell>
                <Cell $w={21}><GrowA $small>A</GrowA><SizeCaret /></Cell>
              </Row>
              <Row>
                <Cell $w={20}><FontLetter>F</FontLetter></Cell>
                <Cell $w={19}><FontLetter $i>K</FontLetter></Cell>
                <Cell $w={22}><FontLetter $u>U</FontLetter></Cell>
                <Cell $w={10}><Caret /></Cell>
                <VSep $w={12} />
                <Cell $w={14}><BordersIcon /></Cell>
                <Cell $w={18}><Caret /></Cell>
                <VSep $w={4} />
                <Cell $w={24}><BucketIcon /></Cell>
                <Cell $w={8}><Caret /></Cell>
                <Cell $w={26}><FontColorIcon /></Cell>
                <Cell $w={5}><Caret /></Cell>
              </Row>
            </Stack>
          </Body>
          <GroupLabel $shift={-8}><span>Schriftart</span><LauncherBox><Launcher /></LauncherBox></GroupLabel>
        </Group>

        <Group $w={291}>
          <Body $pl={4}>
            <Stack>
              <Row>
                <Cell $w={20}><VAlign y={2} /></Cell>
                <Cell $w={21}><VAlign y={5} /></Cell>
                <Cell $w={21} $on><VAlign y={9} /></Cell>
                <VSep $w={10} />
                <Cell $w={18}><OrientIcon /></Cell>
                <Cell $w={8}><Caret /></Cell>
                <Cell $w={14} />
                <VSep $w={8} />
                <Cell $w={21}><WrapIcon /></Cell>
                <span>Textumbruch</span>
              </Row>
              <Row>
                <Cell $w={20}><Lines /></Cell>
                <Cell $w={21}><Lines x0={1} /></Cell>
                <Cell $w={21}><Lines x0={2} /></Cell>
                <VSep $w={10} />
                <Cell $w={18}><IndentIcon back /></Cell>
                <Cell $w={24}><IndentIcon /></Cell>
                <VSep $w={4} />
                <Cell $w={23}><MergeIcon /></Cell>
                <span>Verbinden und zentrieren</span>
                <Cell $w={24}><Caret /></Cell>
              </Row>
            </Stack>
          </Body>
          <GroupLabel $shift={-8}><span>Ausrichtung</span><LauncherBox><Launcher /></LauncherBox></GroupLabel>
        </Group>

        <Group $w={132}>
          <Body $pl={5}>
            <Stack>
              <Row><Combo $w={122}><span>Standard</span><Caret /></Combo></Row>
              <Row>
                <Cell $w={20}><BigSign>$</BigSign></Cell>
                <Cell $w={12}><Caret /></Cell>
                <Cell $w={22}><BigSign>%</BigSign></Cell>
                <Cell $w={20}><ThousandMark>000</ThousandMark></Cell>
                <VSep $w={6} />
                <Cell $w={20}><DecimalIcon more /></Cell>
                <Cell $w={22}><DecimalIcon /></Cell>
              </Row>
            </Stack>
          </Body>
          <GroupLabel $shift={-8}><span>Zahl</span><LauncherBox><Launcher /></LauncherBox></GroupLabel>
        </Group>

        <Group $w={270}>
          <Body>
            <BigButton $w={86}>
              <CondIcon />
              <BigLine>Bedingte</BigLine>
              <BigLine>Formatierung <Caret /></BigLine>
            </BigButton>
            <BigButton $w={78}>
              <TableIcon />
              <BigLine>Als Tabelle</BigLine>
              <BigLine>formatieren <Caret /></BigLine>
            </BigButton>
            <BigButton $w={90}>
              <TableIcon plain />
              <BigLine>Zellenformatvorlagen</BigLine>
              <BigLine><Caret /></BigLine>
            </BigButton>
          </Body>
          <GroupLabel><span>Formatvorlagen</span></GroupLabel>
        </Group>

        <Group $w={92}>
          <Body $pt={0} $pl={6}>
            <Stack $gap={0} $mt={-1}>
              <SmallRow><Cell $w={20}><CellInsIcon /></Cell>Einfügen<Cell $w={16}><Caret /></Cell></SmallRow>
              <SmallRow><Cell $w={20}><CellDelIcon /></Cell>Löschen<Cell $w={16}><Caret /></Cell></SmallRow>
              <SmallRow><Cell $w={20}><CellFmtIcon /></Cell>Format<Cell $w={8}><Caret /></Cell></SmallRow>
            </Stack>
          </Body>
          <GroupLabel><span>Zellen</span></GroupLabel>
        </Group>

        <Group $w={179}>
          <Body $pt={0} $pl={4}>
            <Stack $gap={0} $mt={-1}>
              <SmallRow><Cell $w={20}><Sigma>Σ</Sigma></Cell><Cell $w={12}><Caret /></Cell></SmallRow>
              <SmallRow><Cell $w={20}><FillDownIcon /></Cell><Cell $w={12}><Caret /></Cell></SmallRow>
              <SmallRow><Cell $w={20}><EraserIcon /></Cell><Cell $w={12}><Caret /></Cell></SmallRow>
            </Stack>
            <BigButton $w={72} $mt={3}>
              <SortIcon />
              <BigLine>Sortieren und</BigLine>
              <BigLine>Filtern <Caret /></BigLine>
            </BigButton>
            <BigButton $w={68} $mt={3}>
              <SearchIcon />
              <BigLine>Suchen und</BigLine>
              <BigLine>Auswählen <Caret /></BigLine>
            </BigButton>
          </Body>
          <GroupLabel><span>Bearbeiten</span></GroupLabel>
        </Group>
        <Collapse>
          <svg width="9" height="6" viewBox="0 0 9 6" fill="none" stroke="#666" strokeWidth="1.3"><path d="M1 5l3.5-3.5L8 5" /></svg>
        </Collapse>
      </Ribbon>

      <FormulaBar>
        <NameBox>C5<Caret /></NameBox>
        <GripDots>
          <svg width="3" height="11" viewBox="0 0 3 11" fill="#999"><rect y="0" width="2" height="2" /><rect y="4.5" width="2" height="2" /><rect y="9" width="2" height="2" /></svg>
        </GripDots>
        <FnBox>
          <svg width="12" height="12" viewBox="0 0 12 12" stroke="#c4c4c4" strokeWidth="1.4"><path d="M1 1l10 10M11 1 1 11" /></svg>
          <svg width="14" height="12" viewBox="0 0 14 12" fill="none" stroke="#c4c4c4" strokeWidth="1.4"><path d="M1 7l4 4 8-10" /></svg>
          <FxText>fx</FxText>
        </FnBox>
        <FormulaInput>
          <span>=BINOM.VERT(A5,$B$1,$B$2,WAHR)</span>
          <svg width="10" height="7" viewBox="0 0 10 7" fill="none" stroke="#666" strokeWidth="1.6"><path d="M1 1l4 4 4-4" /></svg>
        </FormulaInput>
      </FormulaBar>

      <SheetRow>
        <Sheet>
          <SheetGrid>
            <Corner>
              <svg width="10" height="10" viewBox="0 0 10 10" fill="#b5b5b5"><path d="M10 0v10H0z" /></svg>
            </Corner>
            {COLS.map((c, i) => (
              <ColHead key={i} $on={c === "C"}>{c}</ColHead>
            ))}
            {ROWS.map((r, i) => {
              const selected = i >= 4 && i <= 6;
              return (
                <React.Fragment key={i}>
                  <RowHead $on={selected}>{i + 1}</RowHead>
                  <GridCell $right={r.aRight} $fill={r.yellow ? "#ffff00" : undefined} $dark={r.yellow}>{r.a}</GridCell>
                  <GridCell $right={r.bRight} $fill={r.yellow ? "#ffff00" : undefined} $dark={r.yellow}>{r.b}</GridCell>
                  <GridCell $right={r.cRight} $fill={i === 5 || i === 6 ? "#c9c9c9" : undefined}>{r.c}</GridCell>
                  {COLS.slice(3).map((_, n) => (
                    <GridCell key={n} />
                  ))}
                </React.Fragment>
              );
            })}
          </SheetGrid>
          <Selection />
          <SourceEdge />
          <FillHandle />
          <FlashTag><FlashIcon /></FlashTag>
          <CrossCursor width="12" height="12" viewBox="0 0 12 12" stroke="#111" strokeWidth="2"><path d="M6 0v12M0 6h12" /></CrossCursor>
          <ChartBox><Chart /></ChartBox>
        </Sheet>
        <VScroll>
          <ScrollBtn><ScrollArrow dir="up" /></ScrollBtn>
          <VThumb />
          <VTrack />
          <ScrollBtn><ScrollArrow dir="down" /></ScrollBtn>
        </VScroll>
      </SheetRow>

      <TabsBar>
        <NavArrows>
          <svg width="5" height="8" viewBox="0 0 5 8" fill="#c0c0c0"><path d="M5 0v8L0 4z" /></svg>
          <svg width="5" height="8" viewBox="0 0 5 8" fill="#c0c0c0"><path d="M0 0l5 4-5 4z" /></svg>
        </NavArrows>
        <SheetTab $w={71}>Tabelle1</SheetTab>
        <SheetTab $w={71}>Tabelle3</SheetTab>
        <SheetTab $w={71}>Tabelle2</SheetTab>
        <SheetTab $w={72}>Tabelle4</SheetTab>
        <SheetTab $w={55} $on>Hoja1</SheetTab>
        <AddSheet>
          <svg width="15" height="15" viewBox="0 0 15 15" fill="none" stroke="#cfcfcf" strokeWidth="1.5"><circle cx="7.5" cy="7.5" r="6.5" /><path d="M7.5 3.5v8M3.5 7.5h8" /></svg>
        </AddSheet>
        <TabGrip>
          <svg width="3" height="11" viewBox="0 0 3 11" fill="#aaa"><rect y="0" width="2" height="2" /><rect y="4.5" width="2" height="2" /><rect y="9" width="2" height="2" /></svg>
        </TabGrip>
        <HScroll>
          <ScrollBtn $w={13}><ScrollArrow dir="left" /></ScrollBtn>
          <HThumb />
          <HTrack />
          <ScrollBtn $w={13}><ScrollArrow dir="right" /></ScrollBtn>
        </HScroll>
      </TabsBar>

      <StatusBar>
        <StatusStat $w={704}>Um Reihen auszufüllen, vergrößern Sie den markierten Bereich.</StatusStat>
        <StatusStat $w={128}>Mittelwert: 1.72354E-13</StatusStat>
        <StatusStat $w={59}>Anzahl: 3</StatusStat>
        <StatusStat $w={114}>Summe: 5.17061E-13</StatusStat>
        <ViewBtn $on>
          <svg width="13" height="13" viewBox="0 0 13 13" fill="none" stroke="#666"><rect x=".5" y=".5" width="12" height="12" /><path d="M4.5 0v13M8.5 0v13M0 4.5h13M0 8.5h13" /></svg>
        </ViewBtn>
        <ViewBtn>
          <svg width="13" height="13" viewBox="0 0 13 13" fill="none" stroke="#666"><rect x=".5" y=".5" width="12" height="12" /><rect x="3.5" y="2.5" width="6" height="8" /><path d="M5 5h3M5 7h3" /></svg>
        </ViewBtn>
        <ViewBtn>
          <svg width="13" height="13" viewBox="0 0 13 13" fill="none" stroke="#666"><path d="M.5 12.5V.5h12v12M.5 8.5h12M4.5 1v7M8.5 1v7" /></svg>
        </ViewBtn>
        <ZoomSign $w={13}>-</ZoomSign>
        <ZoomTrack><ZoomThumb /></ZoomTrack>
        <ZoomSign $w={16}>+</ZoomSign>
        <ZoomValue>100%</ZoomValue>
      </StatusBar>

      <Taskbar>
        <TaskItem $w={45}><WinLogo /></TaskItem>
        <TaskItem $w={45}><SearchTb /></TaskItem>
        <TaskItem $w={45}><TaskViewIcon /></TaskItem>
        <TaskItem $w={48}><ExplorerIcon /></TaskItem>
        <TaskItem $w={45}><StoreIcon /></TaskItem>
        <TaskItem $w={48} $mark><ChromeIcon /></TaskItem>
        <TaskItem $w={45} $on $mark><ExcelIcon /></TaskItem>
        <TrayGroup>
          <TaskItem $w={22}><PeopleIcon /></TaskItem>
          <TaskItem $w={22} $ml={11}><TrayChevron /></TaskItem>
          <TaskItem $w={24}><CloudIcon /></TaskItem>
          <TaskItem $w={20}><BatteryIcon /></TaskItem>
          <TaskItem $w={26}><WifiIcon /></TaskItem>
          <TaskItem $w={14}><VolumeIcon /></TaskItem>
          <TaskItem $w={46}>DEU</TaskItem>
          <Clock>07:08 p. m.<br />05/12/2018</Clock>
          <TaskItem $w={38}>
            <NoticeWrap><NoticeIcon /><NoticeBadge>4</NoticeBadge></NoticeWrap>
          </TaskItem>
          <TaskItem $w={11} />
        </TrayGroup>
      </Taskbar>
    </Page>
  );
};

export default App;
